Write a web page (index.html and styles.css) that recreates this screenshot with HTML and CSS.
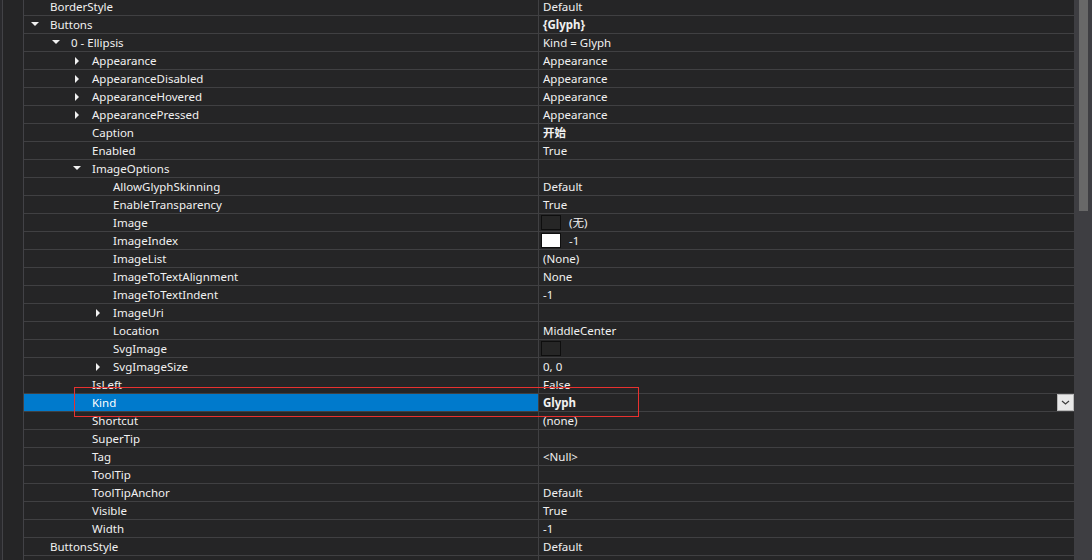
FILE: index.html
```html
<!DOCTYPE html>
<html>
<head>
<meta charset="utf-8">
<link rel="stylesheet" href="styles.css">
</head>
<body>
<div class="frame">
  <div class="gutter"></div>
  <div class="grid">
    <div class="list">
      <div class="row"><div class="name l0"><span class="exp"></span>BorderStyle</div><div class="val">Default</div></div>
      <div class="row"><div class="name l0"><span class="exp"><svg width="19" height="17"><polygon points="0,6 8,6 4,10" /></svg></span>Buttons</div><div class="val b">{Glyph}</div></div>
      <div class="row"><div class="name l1"><span class="exp"><svg width="19" height="17"><polygon points="0,6 8,6 4,10" /></svg></span>0 - Ellipsis</div><div class="val">Kind = Glyph</div></div>
      <div class="row"><div class="name l2"><span class="exp"><svg width="19" height="17"><polygon points="2,5 6,9 2,13" /></svg></span>Appearance</div><div class="val">Appearance</div></div>
      <div class="row"><div class="name l2"><span class="exp"><svg width="19" height="17"><polygon points="2,5 6,9 2,13" /></svg></span>AppearanceDisabled</div><div class="val">Appearance</div></div>
      <div class="row"><div class="name l2"><span class="exp"><svg width="19" height="17"><polygon points="2,5 6,9 2,13" /></svg></span>AppearanceHovered</div><div class="val">Appearance</div></div>
      <div class="row"><div class="name l2"><span class="exp"><svg width="19" height="17"><polygon points="2,5 6,9 2,13" /></svg></span>AppearancePressed</div><div class="val">Appearance</div></div>
      <div class="row"><div class="name l2"><span class="exp"></span>Caption</div><div class="val b">开始</div></div>
      <div class="row"><div class="name l2"><span class="exp"></span>Enabled</div><div class="val">True</div></div>
      <div class="row"><div class="name l2"><span class="exp"><svg width="19" height="17"><polygon points="0,6 8,6 4,10" /></svg></span>ImageOptions</div><div class="val"></div></div>
      <div class="row"><div class="name l3"><span class="exp"></span>AllowGlyphSkinning</div><div class="val">Default</div></div>
      <div class="row"><div class="name l3"><span class="exp"></span>EnableTransparency</div><div class="val">True</div></div>
      <div class="row"><div class="name l3"><span class="exp"></span>Image</div><div class="val"><span class="swatch"></span>(无)</div></div>
      <div class="row"><div class="name l3"><span class="exp"></span>ImageIndex</div><div class="val"><span class="swatch white"></span>-1</div></div>
      <div class="row"><div class="name l3"><span class="exp"></span>ImageList</div><div class="val">(None)</div></div>
      <div class="row"><div class="name l3"><span class="exp"></span>ImageToTextAlignment</div><div class="val">None</div></div>
      <div class="row"><div class="name l3"><span class="exp"></span>ImageToTextIndent</div><div class="val">-1</div></div>
      <div class="row"><div class="name l3"><span class="exp"><svg width="19" height="17"><polygon points="2,5 6,9 2,13" /></svg></span>ImageUri</div><div class="val"></div></div>
      <div class="row"><div class="name l3"><span class="exp"></span>Location</div><div class="val">MiddleCenter</div></div>
      <div class="row"><div class="name l3"><span class="exp"></span>SvgImage</div><div class="val"><span class="swatch"></span></div></div>
      <div class="row"><div class="name l3"><span class="exp"><svg width="19" height="17"><polygon points="2,5 6,9 2,13" /></svg></span>SvgImageSize</div><div class="val">0, 0</div></div>
      <div class="row"><div class="name l2"><span class="exp"></span>IsLeft</div><div class="val">False</div></div>
      <div class="row sel"><div class="name l2"><span class="exp"></span>Kind</div><div class="val b">Glyph<span class="drop"><svg width="15" height="15"><polyline points="4,6 7.5,9 11,6" /></svg></span></div></div>
      <div class="row"><div class="name l2"><span class="exp"></span>Shortcut</div><div class="val">(none)</div></div>
      <div class="row"><div class="name l2"><span class="exp"></span>SuperTip</div><div class="val"></div></div>
      <div class="row"><div class="name l2"><span class="exp"></span>Tag</div><div class="val">&lt;Null&gt;</div></div>
      <div class="row"><div class="name l2"><span class="exp"></span>ToolTip</div><div class="val"></div></div>
      <div class="row"><div class="name l2"><span class="exp"></span>ToolTipAnchor</div><div class="val">Default</div></div>
      <div class="row"><div class="name l2"><span class="exp"></span>Visible</div><div class="val">True</div></div>
      <div class="row"><div class="name l2"><span class="exp"></span>Width</div><div class="val">-1</div></div>
      <div class="row"><div class="name l0"><span class="exp"></span>ButtonsStyle</div><div class="val">Default</div></div>
      <div class="row"><div class="name l0"><span class="exp"></span></div><div class="val"></div></div>
    </div>
  </div>
  <div class="scroll"><div class="thumb"></div></div>
</div>
<div class="mark"></div>
</body>
</html>
```

FILE: styles.css
```css
html, body {
  margin: 0;
  padding: 0;
  width: 1092px;
  height: 560px;
  overflow: hidden;
  background: #2a2a2d;
}
body {
  font-family: "Noto Sans", "Noto Sans CJK SC", sans-serif;
  font-size: 11.5px;
  color: #f1f1f1;
  position: relative;
}
.frame {
  display: grid;
  grid-template-columns: 24px 1050px 18px;
  height: 560px;
}
.gutter {
  margin-left: 2px;
  border-left: 1px solid #424246;
  border-right: 1px solid #424246;
  background: #252526;
}
.grid {
  background: #252526;
  overflow: hidden;
}
.list {
  margin-top: -2px;
}
.row {
  display: flex;
  height: 17px;
  border-bottom: 1px solid #404042;
  line-height: 17px;
  white-space: nowrap;
}
.name {
  width: 514px;
  border-right: 1px solid #404042;
  display: flex;
  align-items: stretch;
  overflow: hidden;
}
.l0 { padding-left: 7px; }
.l1 { padding-left: 28px; }
.l2 { padding-left: 49px; }
.l3 { padding-left: 70px; }
.name.l0 { width: 507px; }
.name.l1 { width: 486px; }
.name.l2 { width: 465px; }
.name.l3 { width: 444px; }
.exp {
  width: 19px;
  height: 17px;
  flex: none;
}
.exp svg {
  display: block;
  fill: #f1f1f1;
}
.val {
  flex: 1;
  padding-left: 4px;
  display: flex;
  align-items: center;
  overflow: hidden;
}
.b {
  font-weight: bold;
}
.swatch {
  width: 18px;
  height: 13px;
  margin-left: -2px;
  margin-right: 8px;
  border: 1px solid #0e0e0e;
  background: #262626;
  box-sizing: content-box;
  flex: none;
}
.swatch.white {
  background: #ffffff;
}
.sel .name {
  background: #007acc;
  color: #ffffff;
}
.drop {
  margin-left: auto;
  width: 15px;
  height: 15px;
  border: 1px solid #b8b8b8;
  background: #e8e8e8;
  flex: none;
  margin-right: 0;
  align-self: flex-start;
}
.drop svg {
  display: block;
  fill: none;
  stroke: #3c3c3c;
  stroke-width: 1.2;
}
.scroll {
  background: #3e3e42;
}
.thumb {
  margin-left: 5px;
  width: 9px;
  height: 211px;
  background: #686868;
}
.mark {
  position: absolute;
  left: 74px;
  top: 387px;
  width: 563px;
  height: 28px;
  border: 1px solid #e8312f;
}
```
